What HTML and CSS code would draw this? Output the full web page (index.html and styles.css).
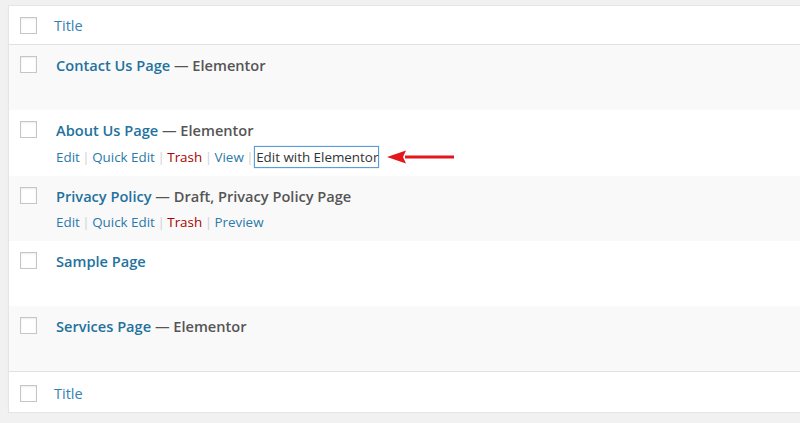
FILE: index.html
```html
<!DOCTYPE html>
<html>
<head>
<meta charset="utf-8">
<link rel="stylesheet" href="styles.css">
</head>
<body>
<div class="table">
  <div class="row head">
    <div class="cb"><span class="box"></span></div>
    <div class="cell"><a class="col-title">Title</a></div>
  </div>
  <div class="row alt h65">
    <div class="cb"><span class="box"></span></div>
    <div class="cell"><div class="title"><a>Contact Us Page</a> — Elementor</div></div>
  </div>
  <div class="row h66">
    <div class="cb"><span class="box"></span></div>
    <div class="cell">
      <div class="title"><a>About Us Page</a> — Elementor</div>
      <div class="actions">
        <a>Edit</a><span class="sep">|</span><a>Quick Edit</a><span class="sep">|</span><a class="trash">Trash</a><span class="sep">|</span><a>View</a><span class="sep">|</span><a class="focus">Edit with Elementor</a>
        <svg class="arrow" width="68" height="14" viewBox="0 0 68 14"><path d="M18 5.5 H67 V8.5 H18 Z" fill="#e3161b"/><path d="M0 7 L19 0.5 L16 7 L19 13.5 Z" fill="#e3161b"/></svg>
      </div>
    </div>
  </div>
  <div class="row alt h65">
    <div class="cb"><span class="box"></span></div>
    <div class="cell">
      <div class="title"><a>Privacy Policy</a> — Draft, Privacy Policy Page</div>
      <div class="actions">
        <a>Edit</a><span class="sep">|</span><a>Quick Edit</a><span class="sep">|</span><a class="trash">Trash</a><span class="sep">|</span><a>Preview</a>
      </div>
    </div>
  </div>
  <div class="row h65">
    <div class="cb"><span class="box"></span></div>
    <div class="cell"><div class="title"><a>Sample Page</a></div></div>
  </div>
  <div class="row alt h65">
    <div class="cb"><span class="box"></span></div>
    <div class="cell"><div class="title"><a>Services Page</a> — Elementor</div></div>
  </div>
  <div class="row foot">
    <div class="cb"><span class="box"></span></div>
    <div class="cell"><a class="col-title">Title</a></div>
  </div>
</div>
</body>
</html>
```
FILE: styles.css
```css
html, body {
  margin: 0;
  padding: 0;
  background: #f1f1f1;
  font-family: "Open Sans", "Noto Sans", sans-serif;
  overflow: hidden;
}
body {
  padding: 5px 0 0 8px;
}
.table {
  width: 820px;
  background: #fff;
  border: 1px solid #e5e5e5;
  border-right: none;
  box-shadow: 0 1px 1px rgba(0,0,0,0.05);
  box-sizing: border-box;
}
.row {
  display: flex;
  box-sizing: border-box;
}
.row.alt { background: #f9f9f9; }
.h65 { height: 65px; }
.h66 { height: 66px; }
.head {
  height: 39px;
  border-bottom: 1px solid #e1e1e1;
}
.foot {
  height: 41px;
  border-top: 1px solid #e1e1e1;
}
.cb {
  width: 47px;
  flex: none;
  padding: 11px 0 0 11px;
  box-sizing: border-box;
}
.head .cb { padding-top: 11px; }
.foot .cb { padding-top: 13px; }
.box {
  display: block;
  width: 17px;
  height: 17px;
  border: 1px solid #c3c7cb;
  background: #fff;
  box-shadow: inset 0 1px 2px rgba(0,0,0,0.08);
  box-sizing: border-box;
}
.cell {
  padding-top: 9px;
}
.head .cell { padding-top: 10px; }
.foot .cell { padding-top: 12px; }
.col-title {
  display: block;
  margin-left: -2px;
  color: #3582b3;
  font-size: 14.5px;
  line-height: 20px;
}
.title {
  font-size: 14.6px;
  font-weight: 600;
  line-height: 23px;
  color: #555;
}
.title a { color: #23719e; }
.actions {
  display: flex;
  align-items: center;
  font-size: 13.4px;
  line-height: 20px;
  margin-top: 4px;
}
.actions a { color: #2a7aaa; }
.actions .trash { color: #a00; }
.sep {
  color: #d0d0d0;
  margin: 0 2.5px;
}
.focus {
  border: 1px solid #5b9dd9;
  box-shadow: 0 0 1px rgba(30,140,190,0.6);
  padding: 0 0 0 1px;
  margin-left: -2px;
  line-height: 20px;
  color: #333 !important;
}
.arrow {
  margin-left: 8px;
}
```
